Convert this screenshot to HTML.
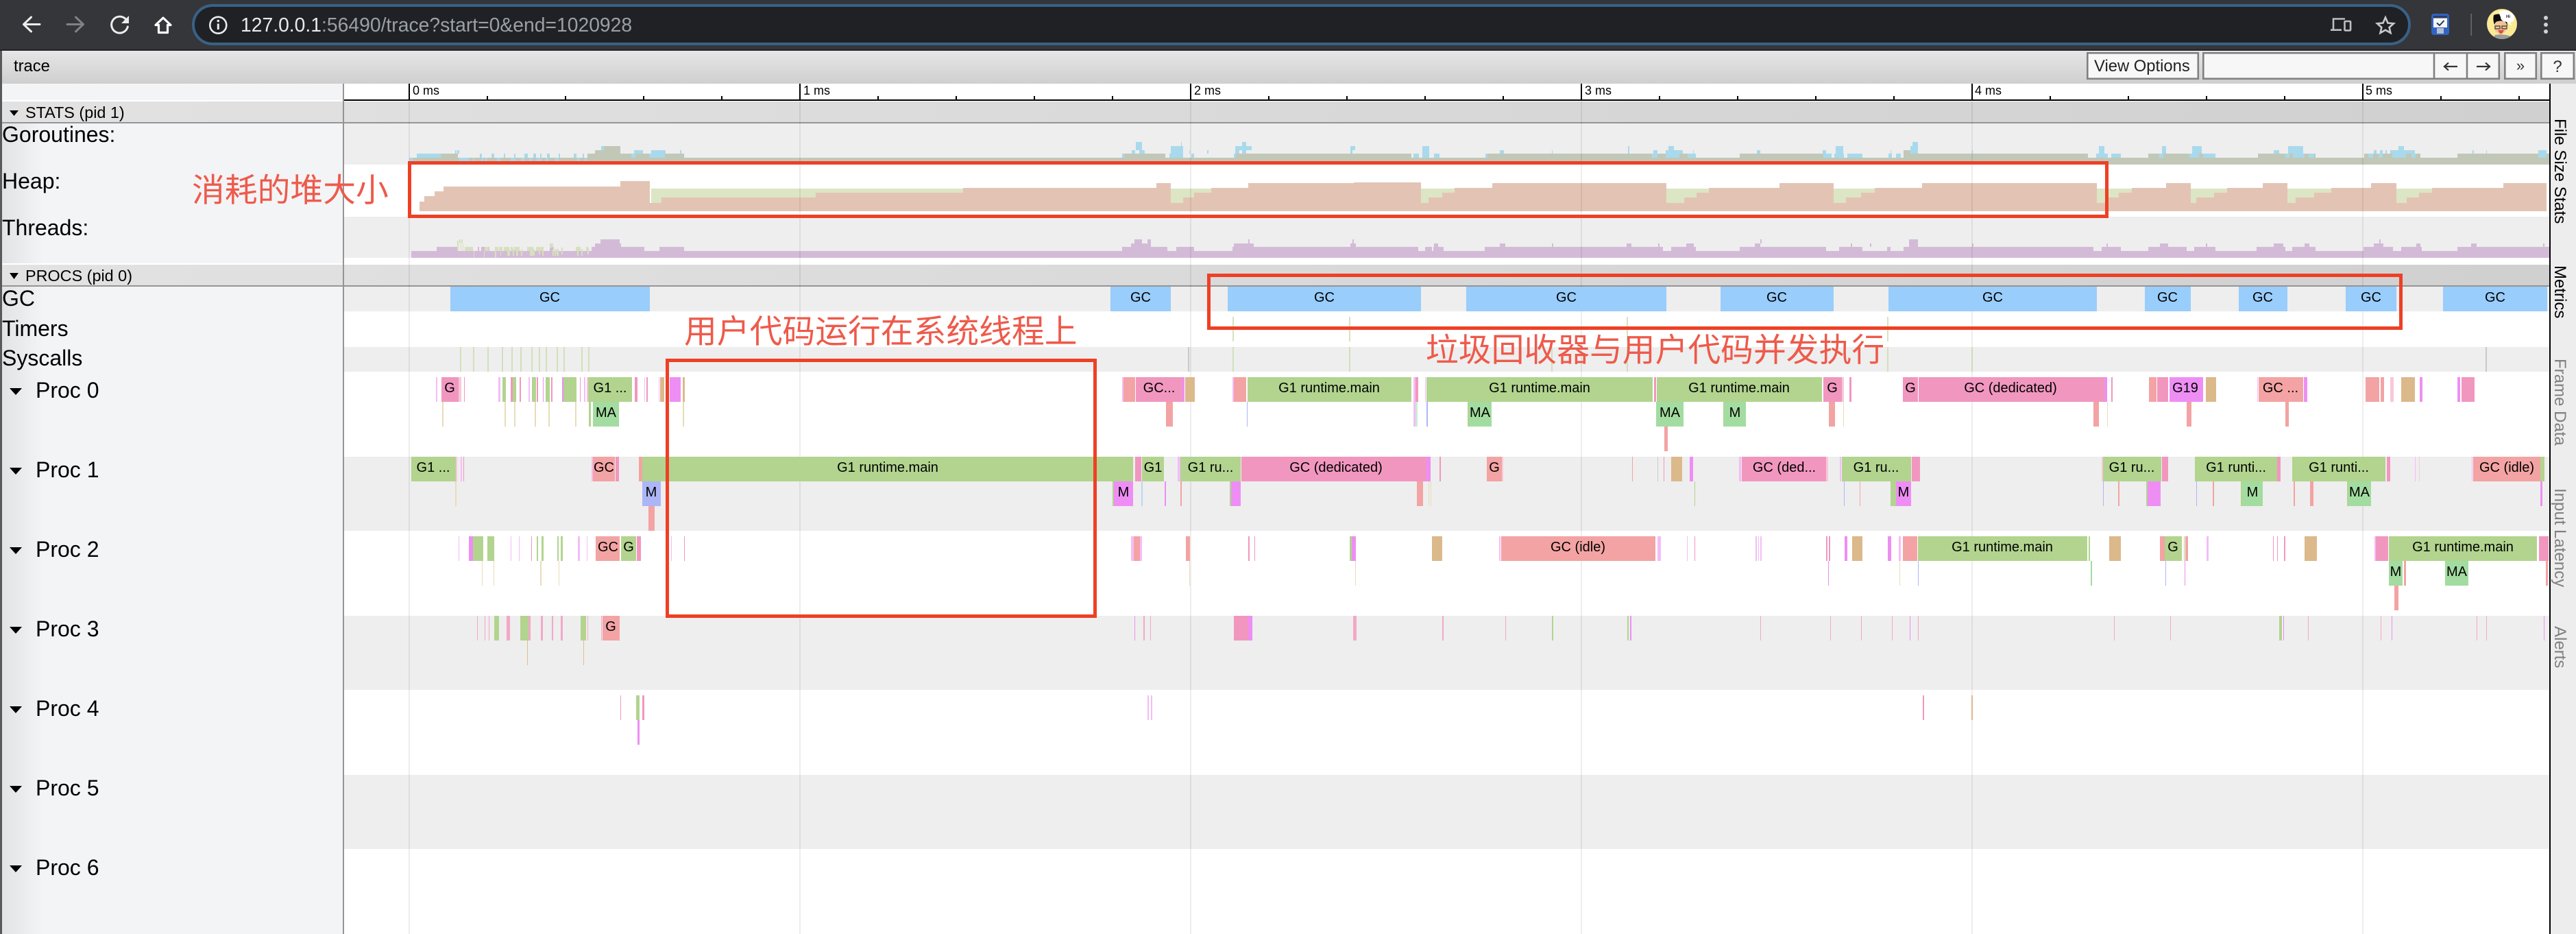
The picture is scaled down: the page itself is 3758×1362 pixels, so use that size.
<!DOCTYPE html>
<html><head><meta charset="utf-8"><title>trace</title>
<style>
html,body{margin:0;padding:0;background:#fff;width:3758px;height:1362px;overflow:hidden}
svg{display:block;font-family:"Liberation Sans","Noto Sans CJK SC",sans-serif}
.c path{fill:none}
.l{font-size:32px;fill:#000}
.h{font-size:23.4px;fill:#000}
.s{font-size:20px;fill:#000;text-anchor:middle}
.r{font-size:18px;fill:#000}
.a{font-size:47.8px;fill:#ee5a4b;font-family:"Liberation Sans","Noto Sans CJK SC",sans-serif}
.v{font-size:24px}
</style></head><body>
<svg width="3758" height="1362" viewBox="0 0 3758 1362" xmlns="http://www.w3.org/2000/svg">
<defs>
<linearGradient id="tb" x1="0" y1="0" x2="0" y2="1"><stop offset="0" stop-color="#e6e6e6"/><stop offset="1" stop-color="#cfcfcf"/></linearGradient>
<linearGradient id="hd" x1="0" y1="0" x2="1" y2="0"><stop offset="0" stop-color="#e2e2e2"/><stop offset="1" stop-color="#d0d0d0"/></linearGradient>
<linearGradient id="lp" x1="0" y1="0" x2="1" y2="0"><stop offset="0" stop-color="#e2e3e5"/><stop offset="1" stop-color="#f3f4f6"/></linearGradient>
<clipPath id="av"><circle cx="3650" cy="35" r="22"/></clipPath>
</defs>

<!-- browser toolbar -->
<rect width="3758" height="74" fill="#35363a"/>
<rect y="72" width="3758" height="2" fill="#232427"/>
<rect x="282" y="8" width="3233" height="56" rx="28" fill="#202124" stroke="#3a6186" stroke-width="4"/>
<g fill="none" stroke-linecap="round" stroke-linejoin="round">
<path stroke="#eceded" stroke-width="3" d="M58 35.5H35M45.5 25L34.5 35.5L45.5 46"/>
<path stroke="#808183" stroke-width="3" d="M98 35.5H121M110.5 25L121.5 35.5L110.5 46"/>
<path stroke="#eceded" stroke-width="3" d="M183 27.5A12 12 0 1 0 186.3 39"/>
<path stroke="#fff" stroke-width="3.2" d="M238 26L227 36.5H231.5V47.5H244.5V36.5H249Z"/>
<circle cx="318.3" cy="36.7" r="12" stroke="#e8eaed" stroke-width="2.6"/>
<path stroke="#e8eaed" stroke-width="3" stroke-linecap="butt" d="M318.3 34.5V43"/>
</g>
<path fill="#eceded" d="M188 23V34H177Z"/>
<circle cx="318.3" cy="30.5" r="1.8" fill="#e8eaed"/>
<text x="351" y="46" font-size="28.3" fill="#e8eaed">127.0.0.1<tspan fill="#9aa0a6">:56490/trace?start=0&amp;end=1020928</tspan></text>
<g fill="none" stroke="#bdbec0" stroke-width="2.6">
<path d="M3404 45V27.5H3421M3400 43.7H3416"/>
<rect x="3420.5" y="31" width="8.6" height="13.4" rx="1"/>
</g>
<path fill="none" stroke="#c8c9cb" stroke-width="2.6" stroke-linejoin="miter" d="M3480 25.5L3483.5 33.5L3492 34.3L3485.6 40L3487.5 48L3480 43.8L3472.5 48L3474.4 40L3468 34.3L3476.5 33.5Z"/>
<rect x="3547" y="20" width="26" height="31" rx="3.5" fill="#3164c2"/>
<rect x="3550" y="23" width="20" height="17" fill="#f4f5f7"/>
<rect x="3550" y="23" width="20" height="3.5" fill="#2c3e63"/>
<path fill="none" stroke="#26324a" stroke-width="2" d="M3555 33.5L3559 37L3565.5 30"/>
<rect x="3555" y="41" width="10" height="8" fill="#b3c0d6"/>
<rect x="3604.4" y="20" width="1.6" height="32" fill="#666a6e"/>
<g clip-path="url(#av)">
<rect x="3628" y="13" width="44" height="44" fill="#fbe995"/>
<path fill="#0b0b0b" d="M3638 22C3645 19 3656 20 3657 30L3658 38H3640Q3636 30 3638 22Z"/>
<ellipse cx="3648" cy="39" rx="9.5" ry="10" fill="#eec39c"/>
<path fill="#0b0b0b" d="M3638 34Q3645 28 3658 32L3658 27L3640 25Z"/>
<path fill="none" stroke="#463524" stroke-width="1.2" d="M3640 38h7v4h-7zM3650 38h7v4h-7z"/>
<path fill="#e44a44" d="M3644 44H3653L3650 49H3647Z"/>
<path fill="#9b9b9b" d="M3636 57L3640 51L3647 50L3656 51L3664 53L3664 57Z"/>
<path fill="#fff" d="M3645 17Q3652 14 3659 16Q3669 20 3668 27Q3667 33 3662 32L3664 38L3657 32Q3648 31 3648 25Q3646 20 3645 17Z"/>
<text x="3656" y="26" font-size="6" font-weight="bold" fill="#222">Hi</text>
</g>
<g fill="#d0d1d3"><circle cx="3714" cy="26" r="3"/><circle cx="3714" cy="36" r="3"/><circle cx="3714" cy="46" r="3"/></g>

<!-- trace title bar -->
<rect y="74" width="3758" height="48" fill="url(#tb)"/>
<text x="20" y="104" font-size="23.8" fill="#000">trace</text>
<g fill="#f7f7f7" stroke="#808080" stroke-width="2.6">
<rect x="3045.3" y="77.3" width="161.5" height="37.5"/>
<rect x="3214.3" y="77.3" width="431.5" height="37.5"/>
<path fill="none" d="M3551 77V115M3599 77V115"/>
<rect x="3654.3" y="77.3" width="45.5" height="37.5"/>
<rect x="3707.3" y="77.3" width="47.5" height="37.5"/>
</g>
<text x="3055" y="104" font-size="23.8" fill="#222">View Options</text>
<g fill="none" stroke="#333" stroke-width="2.2"><path d="M3565 97H3585M3572 91.5L3566 97L3572 102.5"/><path d="M3613 97H3633M3626 91.5L3632 97L3626 102.5"/></g>
<text x="3677" y="103" font-size="22" text-anchor="middle" fill="#333">»</text>
<text x="3731" y="105" font-size="24" text-anchor="middle" fill="#333">?</text>

<!-- side panels -->
<rect x="3" y="122" width="498" height="1240" fill="#f3f4f6"/>
<rect x="3" y="148" width="60" height="1214" fill="url(#lp)"/>
<rect x="0" y="74" width="3" height="1288" fill="#58595b"/>
<rect x="3721" y="122" width="37" height="1240" fill="#ededed"/>
<rect x="3" y="146" width="498" height="2" fill="#fff"/>
<rect x="3" y="384" width="498" height="2" fill="#fff"/>

<!-- track backgrounds -->
<g fill="#eeeeee">
<rect x="502" y="180" width="3217" height="60"/>
<rect x="502" y="316" width="3217" height="60"/>
<rect x="502" y="418" width="3217" height="36"/>
<rect x="502" y="506" width="3217" height="36"/>
<rect x="502" y="666" width="3217" height="108"/>
<rect x="502" y="898" width="3217" height="108"/>
<rect x="502" y="1130" width="3217" height="108"/>
</g>
<rect x="3" y="148" width="3716" height="30" fill="url(#hd)"/>
<rect x="3" y="178" width="3716" height="2" fill="#959595"/>
<rect x="3" y="386" width="3716" height="30" fill="url(#hd)"/>
<rect x="3" y="416" width="3716" height="2" fill="#959595"/>
<rect x="500" y="122" width="2" height="1240" fill="#959595"/>
<rect x="3719" y="122" width="2" height="1240" fill="#000"/>

<!-- ruler -->
<rect x="502" y="145" width="3217" height="2" fill="#000"/>
<g stroke="#000" stroke-width="2" fill="none">
<path d="M597 122V146M1167 122V146M1737 122V146M2307 122V146M2877 122V146M3447 122V146"/>
<path d="M711 140V146M825 140V146M939 140V146M1053 140V146M1281 140V146M1395 140V146M1509 140V146M1623 140V146M1851 140V146M1965 140V146M2079 140V146M2193 140V146M2421 140V146M2535 140V146M2649 140V146M2763 140V146M2991 140V146M3105 140V146M3219 140V146M3333 140V146M3561 140V146M3675 140V146"/>
</g>
<g class="r"><text x="602" y="138">0 ms</text><text x="1172" y="138">1 ms</text><text x="1742" y="138">2 ms</text><text x="2312" y="138">3 ms</text><text x="2881" y="138">4 ms</text><text x="3451" y="138">5 ms</text></g>

<!-- goroutines chart -->
<path fill="#c2c8b8" d="M597 240V230H643V224H668V230H857V224H868V219H877V213H905V224H998V230H1637V224H1700V230H1800V224H2059V230H2167V224H2474V230H2538V224H2664V230H2777V219H2798V224H3046V230H3134V224H3230V230H3294V224H3378V230H3449V224H3531V230H3585V224H3719V240Z"/>
<g fill="none" stroke="#a9d9ec">
<path stroke-width="5" d="M597 232.5H602M670 232.5H684M690 232.5H692M702 232.5H705M708 232.5H711M725 232.5H730M745 232.5H752M760 232.5H765M772 232.5H776M783 232.5H790M796 232.5H800M810 232.5H815M842 232.5H846M853 232.5H856"/>
<path stroke-width="6" d="M608 227H643M700 227H703M717 227H721M735 227H737M750 227H752M765 227H770M778 227H782M788 227H790M798 227H802M815 227H817M837 227H841M850 227H852M921 227H927M947 227H970M1637 227H1640M1706 227H1726M1738 227H1742M1800 227H1803M2062 227H2070M2075 227H2085M2092 227H2100M2167 227H2170M2410 227H2418M2430 227H2450M2462 227H2474M2660 227H2672M2676 227H2690M2695 227H2717M2755 227H2760M2766 227H2773M3058 227H3075M3080 227H3094M3150 227H3156M3194 227H3208M3214 227H3232M3334 227H3340M3345 227H3362M3368 227H3376M3455 227H3462M3470 227H3476M3490 227H3510M3518 227H3524M3703 227H3715"/>
<path stroke-width="5" d="M664 221.5H666M667 221.5H670M925 221.5H938M950 221.5H971M992 221.5H994M1651 221.5H1656M1662 221.5H1670M1708 221.5H1726M1735 221.5H1736M1761 221.5H1763M1802 221.5H1808M1812 221.5H1818M1970 221.5H1973M2075 221.5H2085M2188 221.5H2194M2264 221.5H2265M2375 221.5H2377M2412 221.5H2418M2430 221.5H2455M2470 221.5H2471M2563 221.5H2568M2659 221.5H2664M2678 221.5H2689M2758 221.5H2759M2787 221.5H2798M2877 221.5H2878M3062 221.5H3070M3154 221.5H3160M3198 221.5H3212M3317 221.5H3325M3338 221.5H3360M3463 221.5H3467M3472 221.5H3476M3480 221.5H3482M3487 221.5H3523M3607 221.5H3609M3627 221.5H3628M3703 221.5H3715"/>
<path stroke-width="6" d="M877 216H881M1657 216H1666M1708 216H1726M1802 216H1826M1970 216H1977M2075 216H2085M2375 216H2377M2434 216H2442M2678 216H2689M2787 216H2798M3062 216H3070M3154 216H3160M3198 216H3212M3338 216H3360M3499 216H3507"/>
<path stroke-width="6" d="M1657 210H1666M1723 210H1724M1812 210H1818M2790 210H2798"/>
</g>

<!-- heap chart -->
<g fill="#dce5c4">
<rect x="950" y="275" width="455" height="21"/><rect x="1708" y="275" width="59" height="21"/><rect x="2073" y="275" width="49" height="21"/><rect x="2431" y="275" width="62" height="21"/><rect x="2675" y="275" width="60" height="21"/><rect x="3059" y="275" width="51" height="21"/><rect x="3196" y="275" width="53" height="21"/><rect x="3337" y="275" width="64" height="21"/><rect x="3496" y="275" width="52" height="21"/>
</g>
<path fill="#e3c4b4" d="M612 308V294H619V286H634V279H647V272H905V264H948V296H965V288H1190V281H1405V274H1687V267H1708V296H1726V288H1742V281H1767V274H1821V267H1975V266H2073V296H2084V288H2104V281H2122V274H2177V267H2431V296H2457V288H2475V281H2493V274H2596V267H2675V296H2693V288H2715V281H2735V274H2804V267H3059V296H3076V288H3091V281H3110V274H3160V267H3196V296H3204V288H3230V281H3249V274H3301V267H3337V296H3349V288H3376V281H3401V274H3459V267H3496V296H3511V288H3529V281H3548V274H3652V267H3715V308Z"/>

<!-- threads chart -->
<path fill="#d3bbd8" d="M600 376V366H637V360H667V366H697V360H699V366H702V360H707V366H712V360H714V366H802V360H808V366H863V360H868V355H876V349H904V355H906V360H940V366H962V360H998V366H1637V360H1650V355H1655V349H1666V355H1674V349H1679V360H1703V366H1716V360H1742V366H1798V360H1800V355H1829V360H2069V366H2079V360H2089V366H2091V360H2106V366H2166V360H2426V366H2438V360H2460V355H2471V360H2474V366H2538V360H2560V355H2568V360H2664V366H2683V360H2717V366H2753V360H2758V366H2777V360H2785V349H2798V360H3054V366H3066V360H3094V366H3134V360H3151V355H3163V360H3190V366H3201V360H3232V366H3292V360H3317V355H3331V360H3334V366H3344V360H3362V355H3369V360H3378V366H3448V360H3463V355H3477V360H3491V366H3503V360H3525V355H3531V360H3533V366H3585V360H3605V355H3613V360H3719V376Z"/>
<g fill="none" stroke="#d3bbd8">
<path stroke-width="6" d="M1821 352H1823M1973 352H1975M2568 352H2570M3471 352H3473"/>
<path stroke-width="5" d="M1970 357.5H1978M2092 357.5H2098M2188 357.5H2196M2264 357.5H2266M2373 357.5H2380M2419 357.5H2421M2877 357.5H2879M2700 357.5H2702M2728 357.5H2730M3073 357.5H3075M3218 357.5H3220M3710 357.5H3712"/>
</g>
<g fill="none" stroke="#d6e0bd">
<path stroke-width="6" d="M667 354H669M670 352H672M673 352H675M678 363H690M707 363H713M722 363H727M728 363H733M735 363H743M745 363H748M750 363H758M769 363H778M782 363H787M788 363H793M802 358H807M840 363H847M855 363H858"/>
<path stroke-width="10" d="M667 361H669M672 361H673M675 361H676M691 371H692M706 371H707M722 371H724M730 368H731M740 368H744M748 368H750M753 368H756M760 368H762M773 368H780M786 366H788M791 368H793M806 368H808M809 368H811M812 368H815M819 366H821M842 368H844M848 368H850M857 366H859"/>
</g>

<!-- grid lines -->
<path stroke="#000" stroke-opacity=".08" stroke-width="1.8" fill="none" d="M597 148V1362M1167 148V1362M1737 148V1362M2307 148V1362M2877 148V1362M3447 148V1362"/>

<!-- GC track -->
<g fill="#99cdfb">
<rect x="657" y="418" width="291" height="36"/><rect x="1620" y="418" width="88" height="36"/><rect x="1791" y="418" width="282" height="36"/><rect x="2139" y="418" width="292" height="36"/><rect x="2510" y="418" width="165" height="36"/><rect x="2755" y="418" width="304" height="36"/><rect x="3129" y="418" width="67" height="36"/><rect x="3266" y="418" width="71" height="36"/><rect x="3422" y="418" width="74" height="36"/><rect x="3564" y="418" width="152" height="36"/>
</g>
<g class="s"><text x="802" y="440">GC</text><text x="1664" y="440">GC</text><text x="1932" y="440">GC</text><text x="2285" y="440">GC</text><text x="2592" y="440">GC</text><text x="2907" y="440">GC</text><text x="3162" y="440">GC</text><text x="3301" y="440">GC</text><text x="3459" y="440">GC</text><text x="3640" y="440">GC</text></g>

<!-- timers, syscalls -->
<g fill="none" stroke="#c8dba8" stroke-width="1.5">
<path d="M1799 462V498M1969 462V498M2374 462V498M2754 462V498"/>
<path d="M672 506V542M691 506V542M712 506V542M733 506V542M747 506V542M760 506V542M776 506V542M787 506V542M797 506V542M813 506V542M823 506V542M849 506V542M859 506V542M1799 506V542M1969 506V542M2264 506V542M2374 506V542M2754 506V542M2877 506V542"/>
<path stroke="#bbbbbb" d="M1734 506V542M3627 506V542"/>
</g>

<!-- Proc rows -->
<g class="c" stroke-width="36">
<!-- Proc 0 r1 -->
<path stroke="#f3bdf7" d="M636 568H638M727 568H730M771 568H773M852 568H854M940 568H941M961 568H962M1637 568H1639M1798 568H1800M2062 568H2065M2079 568H2080M3293 568H3294"/>
<path stroke="#f8c8d8" d="M669 568H673M856 568H858M2687 568H2690M3487 568H3492"/>
<path stroke="#f197bf" d="M644 568H669M677 568H678M745 568H748M758 568H760M783 568H785M804 568H806M846 568H847M926 568H930M943 568H945M1657 568H1725M2065 568H2069M2413 568H2416M2660 568H2687M2698 568H2701M2776 568H2798M2799 568H3070M3080 568H3082M3147 568H3163M3591 568H3610"/>
<path stroke="#b2d48f" d="M733 568H738M748 568H753M776 568H782M796 568H802M822 568H841M858 568H922M1820 568H2059M2081 568H2411M2417 568H2658"/>
<path stroke="#dcb98b" d="M963 568H969M996 568H999M1729 568H1743M3218 568H3233M3503 568H3523"/>
<path stroke="#ee8ef4" d="M792 568H793M820 568H822M977 568H993M1725 568H1728M3070 568H3074M3165 568H3214M3361 568H3366M3530 568H3534M3585 568H3589"/>
<path stroke="#f3a3a3" d="M1639 568H1656M1800 568H1818M3135 568H3146M3295 568H3360M3451 568H3471M3473 568H3478"/>
<!-- Proc 0 r2 -->
<path stroke="#e8dcb8" d="M645 604H647M736 604H738M750 604H752M780 604H782M800 604H802M839 604H841M996 604H998M2689 604H2690M3074 604H3075"/>
<path stroke="#b2d48f" d="M859 604H862M2141 604H2143M2514 604H2515"/>
<path stroke="#a3dca0" d="M865 604H903M2143 604H2176M2416 604H2456M2515 604H2547"/>
<path stroke="#f3a3a3" d="M1701 604H1711M2668 604H2677M3054 604H3062M3190 604H3197M3334 604H3339M2428 640H2433"/>
<path stroke="#acb6f6" d="M1819 604H1820M2081 604H2083"/>
<path stroke="#f3bdf7" d="M2062 604H2065"/>
<path stroke="#c8ecd8" d="M2065 604H2068"/>
<!-- Proc 1 r1 -->
<path stroke="#b2d48f" d="M600 684H665M937 684H1653M1666 684H1698M1722 684H1810M2687 684H2788M3068 684H3153M3202 684H3322M3344 684H3480M3706 684H3712"/>
<path stroke="#f197bf" d="M676 684H677M898 684H903M1656 684H1665M1811 684H2081M2100 684H2102M2541 684H2664M2789 684H2801M3154 684H3163M3322 684H3327M3482 684H3487M2427 684H2428"/>
<path stroke="#f3a3a3" d="M865 684H897M932 684H937M2169 684H2191M2381 684H2382M3608 684H3706"/>
<path stroke="#f3bdf7" d="M672 684H674M863 684H865M1718 684H1722M2537 684H2540M2684 684H2686M3606 684H3607M3523 684H3524"/>
<path stroke="#f8c8d8" d="M665 684H667M2191 684H2193M3529 684H3530M3066 684H3068M2664 684H2667"/>
<path stroke="#ee8ef4" d="M2081 684H2087M2465 684H2470"/>
<path stroke="#dcb98b" d="M2438 684H2454"/>
<path stroke="#cccccc" d="M2418 684H2419"/>
<!-- Proc 1 r2 -->
<path stroke="#e8dcb8" d="M664 720H666M2084 720H2085M2087 720H2088"/>
<path stroke="#acb6f6" d="M937 720H964M2690 720H2691M3068 720H3069M3204 720H3205"/>
<path stroke="#ee8ef4" d="M1625 720H1653M1699 720H1701M1796 720H1810M2766 720H2788M3133 720H3152M3706 720H3709"/>
<path stroke="#b9d6f5" d="M1665 720H1667"/>
<path stroke="#f3a3a3" d="M1722 720H1724M2067 720H2076M2713 720H2714M3090 720H3092M3228 720H3230M3346 720H3348M3370 720H3375M946 756H955"/>
<path stroke="#b2d48f" d="M1623 720H1625M1794 720H1796M2758 720H2766M3131 720H3133M3269 720H3271M3424 720H3426M2472 720H2473"/>
<path stroke="#a3dca0" d="M3271 720H3301M3426 720H3459"/>
<!-- Proc 2 r1 -->
<path stroke="#f3bdf7" d="M669 800H670M745 800H746M757 800H758M843 800H846M856 800H857M979 800H980M2187 800H2189M3219 800H3222M2561 800H2563M2565 800H2566M2568 800H2570M2770 800H2773M1650 800H1654M1663 800H1666M2418 800H2423M2461 800H2462M3464 800H3466"/>
<path stroke="#ee8ef4" d="M684 800H690M1972 800H1978M2691 800H2695M2754 800H2759"/>
<path stroke="#b2d48f" d="M690 800H705M711 800H721M783 800H785M790 800H793M813 800H815M818 800H821M906 800H928M1969 800H1972M2798 800H3045M3158 800H3183M3485 800H3701M3047 800H3049M3186 800H3187"/>
<path stroke="#f197bf" d="M775 800H776M929 800H935M998 800H999M1821 800H1823M1830 800H1831M3466 800H3484M3704 800H3718M3316 800H3317M3322 800H3323M3332 800H3334M2664 800H2666M2668 800H2670M2472 800H2473"/>
<path stroke="#f3a3a3" d="M869 800H904M1654 800H1663M1730 800H1736M2190 800H2415M2776 800H2797M3151 800H3158M3188 800H3192"/>
<path stroke="#dcb98b" d="M2089 800H2104M2702 800H2717M3077 800H3094M3362 800H3380"/>
<!-- Proc 2 r2 -->
<path stroke="#e8dcb8" d="M703 836H704M720 836H721M788 836H790M815 836H816M1735 836H1736M1977 836H1978M2771 836H2772"/>
<path stroke="#ee8ef4" d="M2667 836H2668M3187 836H3188"/>
<path stroke="#acb6f6" d="M2798 836H2799M3159 836H3160"/>
<path stroke="#a3dca0" d="M3485 836H3505M3567 836H3601M3050 836H3052"/>
<path stroke="#f3a3a3" d="M3507 836H3510M3714 836H3717M3493 872H3499"/>
<!-- Proc 3 -->
<path stroke="#f3a8c8" d="M696 916H697M707 916H708M713 916H714M739 916H744M771 916H774M789 916H792M805 916H807M818 916H821M857 916H858M877 916H878M1668 916H1670M1678 916H1679M1974 916H1979M2104 916H2106M2196 916H2197M2568 916H2569M2670 916H2671M2715 916H2716M2760 916H2761M2798 916H2799M3084 916H3085M3166 916H3167M3367 916H3368M3473 916H3474M3613 916H3614M3627 916H3628"/>
<path stroke="#f197bf" d="M1800 916H1821"/>
<path stroke="#b2d48f" d="M721 916H728M759 916H771M847 916H855M2264 916H2266M2374 916H2376M3325 916H3329"/>
<path stroke="#f3a3a3" d="M879 916H904"/>
<path stroke="#ee8ef4" d="M1655 916H1656M1821 916H1827M2378 916H2380M2786 916H2787M3331 916H3332M3489 916H3490M3711 916H3712"/>
<path stroke="#dcc08f" d="M769 952H770M851 952H852"/>
<!-- Proc 4 -->
<path stroke="#f197bf" d="M905 1032H906M937 1032H940M2805 1032H2807"/>
<path stroke="#b2d48f" d="M928 1032H933"/>
<path stroke="#f3bdf7" d="M1674 1032H1676M1679 1032H1681"/>
<path stroke="#dcb98b" d="M2876 1032H2878"/>
<path stroke="#ee8ef4" d="M930 1068H933"/>
</g>

<!-- slice labels -->
<g class="s">
<text x="656" y="572">G</text><text x="890" y="572">G1 ...</text><text x="1691" y="572">GC...</text><text x="1939" y="572">G1 runtime.main</text><text x="2246" y="572">G1 runtime.main</text><text x="2537" y="572">G1 runtime.main</text><text x="2673" y="572">G</text><text x="2787" y="572">G</text><text x="2933" y="572">GC (dedicated)</text><text x="3188" y="572">G19</text><text x="3327" y="572">GC ...</text>
<text x="884" y="608">MA</text><text x="2159" y="608">MA</text><text x="2436" y="608">MA</text><text x="2531" y="608">M</text>
<text x="632" y="688">G1 ...</text><text x="881" y="688">GC</text><text x="1295" y="688">G1 runtime.main</text><text x="1682" y="688">G1</text><text x="1766" y="688">G1 ru...</text><text x="1949" y="688">GC (dedicated)</text><text x="2180" y="688">G</text><text x="2603" y="688">GC (ded...</text><text x="2737" y="688">G1 ru...</text><text x="3110" y="688">G1 ru...</text><text x="3262" y="688">G1 runti...</text><text x="3412" y="688">G1 runti...</text><text x="3657" y="688">GC (idle)</text>
<text x="950" y="724">M</text><text x="1639" y="724">M</text><text x="2777" y="724">M</text><text x="3286" y="724">M</text><text x="3442" y="724">MA</text>
<text x="887" y="804">GC</text><text x="917" y="804">G</text><text x="2302" y="804">GC (idle)</text><text x="2921" y="804">G1 runtime.main</text><text x="3170" y="804">G</text><text x="3593" y="804">G1 runtime.main</text>
<text x="3495" y="840">M</text><text x="3584" y="840">MA</text>
<text x="891" y="920">G</text>
</g>

<!-- left labels -->
<text class="h" x="37" y="172">STATS (pid 1)</text>
<text class="h" x="37" y="410">PROCS (pid 0)</text>
<path d="M14 161H27L20.5 169Z M14 398H27L20.5 407Z"/>
<g class="l">
<text x="3" y="207">Goroutines:</text><text x="3" y="275">Heap:</text><text x="3" y="343">Threads:</text><text x="3" y="446">GC</text><text x="3" y="490">Timers</text><text x="3" y="533">Syscalls</text>
<text x="52" y="580">Proc 0</text><text x="52" y="696">Proc 1</text><text x="52" y="812">Proc 2</text><text x="52" y="928">Proc 3</text><text x="52" y="1044">Proc 4</text><text x="52" y="1160">Proc 5</text><text x="52" y="1276">Proc 6</text>
</g>
<path d="M14 566H32L23 576Z M14 682H32L23 692Z M14 798H32L23 808Z M14 914H32L23 924Z M14 1030H32L23 1040Z M14 1146H32L23 1156Z M14 1262H32L23 1272Z"/>

<!-- right side tabs -->
<g class="v">
<text transform="translate(3727,173) rotate(90)" fill="#000">File Size Stats</text>
<text transform="translate(3727,387) rotate(90)" fill="#000">Metrics</text>
<text transform="translate(3727,523) rotate(90)" fill="#808080">Frame Data</text>
<text transform="translate(3727,712) rotate(90)" fill="#808080">Input Latency</text>
<text transform="translate(3727,913) rotate(90)" fill="#808080">Alerts</text>
</g>

<!-- red annotation boxes -->
<g fill="none" stroke="#ee4025" stroke-width="5">
<rect x="597.5" y="237.5" width="2476" height="78"/>
<rect x="1763.5" y="401.5" width="1739" height="77"/>
<rect x="973.5" y="525.5" width="624" height="373"/>
</g>
<text class="a" x="280" y="294">消耗的堆大小</text>
<text class="a" x="998" y="500">用户代码运行在系统线程上</text>
<text class="a" x="2080" y="527">垃圾回收器与用户代码并发执行</text>
</svg>
</body></html>
